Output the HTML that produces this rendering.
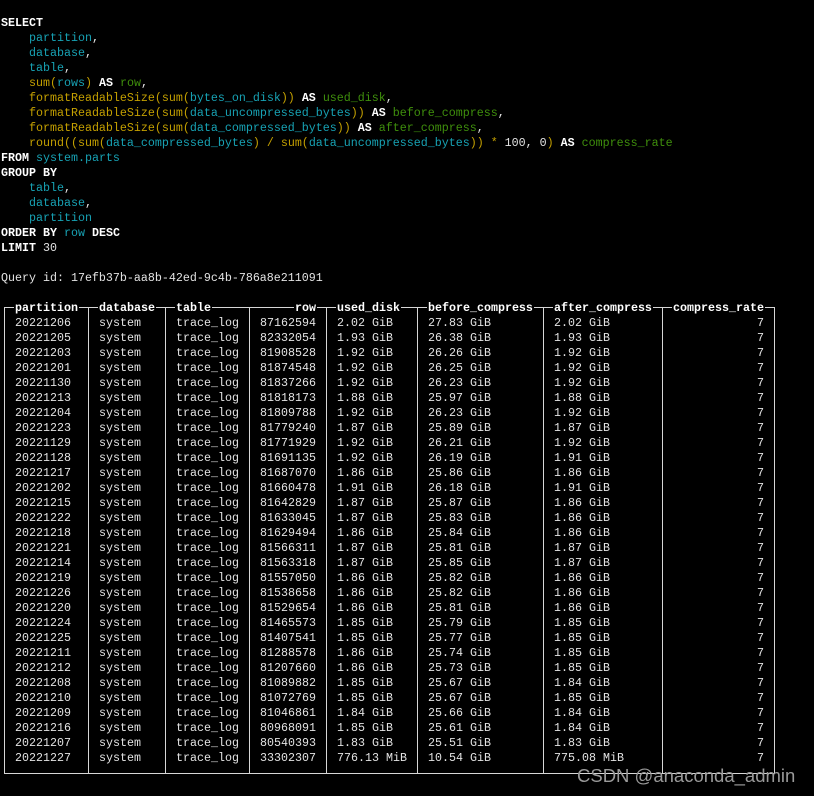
<!DOCTYPE html>
<html><head><meta charset="utf-8"><style>
html,body{margin:0;padding:0;background:#000;width:814px;height:796px;overflow:hidden}
body{position:relative;font-family:"Liberation Mono","DejaVu Sans Mono",monospace;font-size:11.67px;color:#e3e3e3}
pre{position:absolute;left:1px;top:16px;margin:0;font:inherit;line-height:15px;white-space:pre}
.k{color:#fff;font-weight:bold}.i{color:#17a2b4}.f{color:#c4a000}.g{color:#3f8f0c}
.rows{position:absolute;left:0;top:2px;width:814px;height:796px}
.r{position:absolute;left:0;height:15px;line-height:15px;width:814px}
.r span{position:absolute;top:0;white-space:pre}
.c1{left:15px}.c2{left:99px}.c3{left:176px}.c4{left:253px;width:63px;text-align:right}
.c5{left:337px}.c6{left:428px}.c7{left:554px}.c8{left:757px}
.h span{background:#000;color:#fff;font-weight:bold;padding:0 1px;margin-left:-1px}
.v{position:absolute;top:307px;height:467px;width:1px;background:#d6d6d6}
.hl{position:absolute;left:4px;width:771px;height:1px;background:#d6d6d6}
.wm{position:absolute;left:577px;top:765px;font-family:"Liberation Sans",sans-serif;font-size:18.5px;color:#9a9a9a;white-space:nowrap}
</style></head><body>
<pre><span class="k">SELECT</span>
    <span class="i">partition</span>,
    <span class="i">database</span>,
    <span class="i">table</span>,
    <span class="f">sum(</span><span class="i">rows</span><span class="f">)</span> <span class="k">AS</span> <span class="g">row</span>,
    <span class="f">formatReadableSize(sum(</span><span class="i">bytes_on_disk</span><span class="f">))</span> <span class="k">AS</span> <span class="g">used_disk</span>,
    <span class="f">formatReadableSize(sum(</span><span class="i">data_uncompressed_bytes</span><span class="f">))</span> <span class="k">AS</span> <span class="g">before_compress</span>,
    <span class="f">formatReadableSize(sum(</span><span class="i">data_compressed_bytes</span><span class="f">))</span> <span class="k">AS</span> <span class="g">after_compress</span>,
    <span class="f">round((sum(</span><span class="i">data_compressed_bytes</span><span class="f">) / sum(</span><span class="i">data_uncompressed_bytes</span><span class="f">)) *</span> 100, 0<span class="f">)</span> <span class="k">AS</span> <span class="g">compress_rate</span>
<span class="k">FROM</span> <span class="i">system.parts</span>
<span class="k">GROUP BY</span>
    <span class="i">table</span>,
    <span class="i">database</span>,
    <span class="i">partition</span>
<span class="k">ORDER BY</span> <span class="i">row</span> <span class="k">DESC</span>
<span class="k">LIMIT</span> 30

Query id: 17efb37b-aa8b-42ed-9c4b-786a8e211091</pre>

<div class="hl" style="top:307px"></div>
<div class="hl" style="top:773px"></div>
<div class="v" style="left:4px"></div><div class="v" style="left:88px"></div><div class="v" style="left:165px"></div><div class="v" style="left:249px"></div><div class="v" style="left:326px"></div><div class="v" style="left:417px"></div><div class="v" style="left:543px"></div><div class="v" style="left:662px"></div><div class="v" style="left:774px"></div>

<div class="rows">
<div class="r h" style="top:299px"><span class="c1">partition</span><span class="c2">database</span><span class="c3">table</span><span style="left:295px">row</span><span class="c5">used_disk</span><span class="c6">before_compress</span><span class="c7">after_compress</span><span style="left:673px">compress_rate</span></div>

<div class="r" style="top:314px"><span class="c1">20221206</span><span class="c2">system</span><span class="c3">trace_log</span><span class="c4">87162594</span><span class="c5">2.02 GiB</span><span class="c6">27.83 GiB</span><span class="c7">2.02 GiB</span><span class="c8">7</span></div>
<div class="r" style="top:329px"><span class="c1">20221205</span><span class="c2">system</span><span class="c3">trace_log</span><span class="c4">82332054</span><span class="c5">1.93 GiB</span><span class="c6">26.38 GiB</span><span class="c7">1.93 GiB</span><span class="c8">7</span></div>
<div class="r" style="top:344px"><span class="c1">20221203</span><span class="c2">system</span><span class="c3">trace_log</span><span class="c4">81908528</span><span class="c5">1.92 GiB</span><span class="c6">26.26 GiB</span><span class="c7">1.92 GiB</span><span class="c8">7</span></div>
<div class="r" style="top:359px"><span class="c1">20221201</span><span class="c2">system</span><span class="c3">trace_log</span><span class="c4">81874548</span><span class="c5">1.92 GiB</span><span class="c6">26.25 GiB</span><span class="c7">1.92 GiB</span><span class="c8">7</span></div>
<div class="r" style="top:374px"><span class="c1">20221130</span><span class="c2">system</span><span class="c3">trace_log</span><span class="c4">81837266</span><span class="c5">1.92 GiB</span><span class="c6">26.23 GiB</span><span class="c7">1.92 GiB</span><span class="c8">7</span></div>
<div class="r" style="top:389px"><span class="c1">20221213</span><span class="c2">system</span><span class="c3">trace_log</span><span class="c4">81818173</span><span class="c5">1.88 GiB</span><span class="c6">25.97 GiB</span><span class="c7">1.88 GiB</span><span class="c8">7</span></div>
<div class="r" style="top:404px"><span class="c1">20221204</span><span class="c2">system</span><span class="c3">trace_log</span><span class="c4">81809788</span><span class="c5">1.92 GiB</span><span class="c6">26.23 GiB</span><span class="c7">1.92 GiB</span><span class="c8">7</span></div>
<div class="r" style="top:419px"><span class="c1">20221223</span><span class="c2">system</span><span class="c3">trace_log</span><span class="c4">81779240</span><span class="c5">1.87 GiB</span><span class="c6">25.89 GiB</span><span class="c7">1.87 GiB</span><span class="c8">7</span></div>
<div class="r" style="top:434px"><span class="c1">20221129</span><span class="c2">system</span><span class="c3">trace_log</span><span class="c4">81771929</span><span class="c5">1.92 GiB</span><span class="c6">26.21 GiB</span><span class="c7">1.92 GiB</span><span class="c8">7</span></div>
<div class="r" style="top:449px"><span class="c1">20221128</span><span class="c2">system</span><span class="c3">trace_log</span><span class="c4">81691135</span><span class="c5">1.92 GiB</span><span class="c6">26.19 GiB</span><span class="c7">1.91 GiB</span><span class="c8">7</span></div>
<div class="r" style="top:464px"><span class="c1">20221217</span><span class="c2">system</span><span class="c3">trace_log</span><span class="c4">81687070</span><span class="c5">1.86 GiB</span><span class="c6">25.86 GiB</span><span class="c7">1.86 GiB</span><span class="c8">7</span></div>
<div class="r" style="top:479px"><span class="c1">20221202</span><span class="c2">system</span><span class="c3">trace_log</span><span class="c4">81660478</span><span class="c5">1.91 GiB</span><span class="c6">26.18 GiB</span><span class="c7">1.91 GiB</span><span class="c8">7</span></div>
<div class="r" style="top:494px"><span class="c1">20221215</span><span class="c2">system</span><span class="c3">trace_log</span><span class="c4">81642829</span><span class="c5">1.87 GiB</span><span class="c6">25.87 GiB</span><span class="c7">1.86 GiB</span><span class="c8">7</span></div>
<div class="r" style="top:509px"><span class="c1">20221222</span><span class="c2">system</span><span class="c3">trace_log</span><span class="c4">81633045</span><span class="c5">1.87 GiB</span><span class="c6">25.83 GiB</span><span class="c7">1.86 GiB</span><span class="c8">7</span></div>
<div class="r" style="top:524px"><span class="c1">20221218</span><span class="c2">system</span><span class="c3">trace_log</span><span class="c4">81629494</span><span class="c5">1.86 GiB</span><span class="c6">25.84 GiB</span><span class="c7">1.86 GiB</span><span class="c8">7</span></div>
<div class="r" style="top:539px"><span class="c1">20221221</span><span class="c2">system</span><span class="c3">trace_log</span><span class="c4">81566311</span><span class="c5">1.87 GiB</span><span class="c6">25.81 GiB</span><span class="c7">1.87 GiB</span><span class="c8">7</span></div>
<div class="r" style="top:554px"><span class="c1">20221214</span><span class="c2">system</span><span class="c3">trace_log</span><span class="c4">81563318</span><span class="c5">1.87 GiB</span><span class="c6">25.85 GiB</span><span class="c7">1.87 GiB</span><span class="c8">7</span></div>
<div class="r" style="top:569px"><span class="c1">20221219</span><span class="c2">system</span><span class="c3">trace_log</span><span class="c4">81557050</span><span class="c5">1.86 GiB</span><span class="c6">25.82 GiB</span><span class="c7">1.86 GiB</span><span class="c8">7</span></div>
<div class="r" style="top:584px"><span class="c1">20221226</span><span class="c2">system</span><span class="c3">trace_log</span><span class="c4">81538658</span><span class="c5">1.86 GiB</span><span class="c6">25.82 GiB</span><span class="c7">1.86 GiB</span><span class="c8">7</span></div>
<div class="r" style="top:599px"><span class="c1">20221220</span><span class="c2">system</span><span class="c3">trace_log</span><span class="c4">81529654</span><span class="c5">1.86 GiB</span><span class="c6">25.81 GiB</span><span class="c7">1.86 GiB</span><span class="c8">7</span></div>
<div class="r" style="top:614px"><span class="c1">20221224</span><span class="c2">system</span><span class="c3">trace_log</span><span class="c4">81465573</span><span class="c5">1.85 GiB</span><span class="c6">25.79 GiB</span><span class="c7">1.85 GiB</span><span class="c8">7</span></div>
<div class="r" style="top:629px"><span class="c1">20221225</span><span class="c2">system</span><span class="c3">trace_log</span><span class="c4">81407541</span><span class="c5">1.85 GiB</span><span class="c6">25.77 GiB</span><span class="c7">1.85 GiB</span><span class="c8">7</span></div>
<div class="r" style="top:644px"><span class="c1">20221211</span><span class="c2">system</span><span class="c3">trace_log</span><span class="c4">81288578</span><span class="c5">1.86 GiB</span><span class="c6">25.74 GiB</span><span class="c7">1.85 GiB</span><span class="c8">7</span></div>
<div class="r" style="top:659px"><span class="c1">20221212</span><span class="c2">system</span><span class="c3">trace_log</span><span class="c4">81207660</span><span class="c5">1.86 GiB</span><span class="c6">25.73 GiB</span><span class="c7">1.85 GiB</span><span class="c8">7</span></div>
<div class="r" style="top:674px"><span class="c1">20221208</span><span class="c2">system</span><span class="c3">trace_log</span><span class="c4">81089882</span><span class="c5">1.85 GiB</span><span class="c6">25.67 GiB</span><span class="c7">1.84 GiB</span><span class="c8">7</span></div>
<div class="r" style="top:689px"><span class="c1">20221210</span><span class="c2">system</span><span class="c3">trace_log</span><span class="c4">81072769</span><span class="c5">1.85 GiB</span><span class="c6">25.67 GiB</span><span class="c7">1.85 GiB</span><span class="c8">7</span></div>
<div class="r" style="top:704px"><span class="c1">20221209</span><span class="c2">system</span><span class="c3">trace_log</span><span class="c4">81046861</span><span class="c5">1.84 GiB</span><span class="c6">25.66 GiB</span><span class="c7">1.84 GiB</span><span class="c8">7</span></div>
<div class="r" style="top:719px"><span class="c1">20221216</span><span class="c2">system</span><span class="c3">trace_log</span><span class="c4">80968091</span><span class="c5">1.85 GiB</span><span class="c6">25.61 GiB</span><span class="c7">1.84 GiB</span><span class="c8">7</span></div>
<div class="r" style="top:734px"><span class="c1">20221207</span><span class="c2">system</span><span class="c3">trace_log</span><span class="c4">80540393</span><span class="c5">1.83 GiB</span><span class="c6">25.51 GiB</span><span class="c7">1.83 GiB</span><span class="c8">7</span></div>
<div class="r" style="top:749px"><span class="c1">20221227</span><span class="c2">system</span><span class="c3">trace_log</span><span class="c4">33302307</span><span class="c5">776.13 MiB</span><span class="c6">10.54 GiB</span><span class="c7">775.08 MiB</span><span class="c8">7</span></div>
</div>

<div class="wm">CSDN @anaconda_admin</div>
</body></html>
